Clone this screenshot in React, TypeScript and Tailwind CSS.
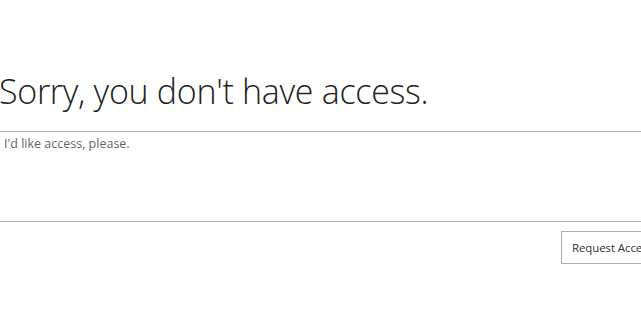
export default function App() {
  return (
    <div className="h-[336px] w-[641px] overflow-hidden bg-white font-['Open_Sans','Noto_Sans',sans-serif]">
      <div className="w-[760px] pt-[66px]">
        <h1 className="-ml-[1px] text-[34px] font-light leading-[50px] tracking-[-0.3px] text-[#222222]">
          Sorry, you don't have access.
        </h1>
        <div className="mt-[15px] h-[91px] border-y border-[#ababab] px-[4px] pt-[3px] text-[12.5px] text-[#666666]">
          I'd like access, please.
        </div>
        <div className="flex">
          <button className="ml-[561px] mt-[9px] h-[33px] whitespace-nowrap border border-[#ababab] bg-white px-[10px] text-[11.5px] tracking-[-0.1px] text-[#333333]">
            Request Access
          </button>
        </div>
      </div>
    </div>
  );
}
